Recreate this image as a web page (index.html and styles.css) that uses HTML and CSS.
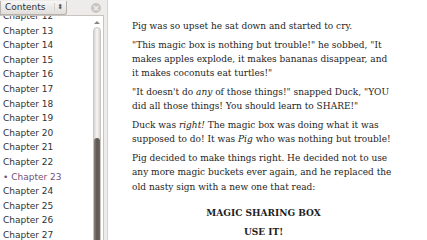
FILE: index.html
```html
<!DOCTYPE html>
<html lang="en">
<head>
    <meta charset="UTF-8">
    <title>Magic Box</title>
    <link rel="stylesheet" href="styles.css">
</head>
<body>

<div id="reader">
    <div id="sidebar">
        <div class="toolbar">
            <div class="combo">
                <span>Contents</span>
                <span class="combo-arrows">&#x2B0D;</span>
            </div>
            <div class="close-btn">&times;</div>
        </div>
        <div class="toc">
            <ul class="chapters">
                <li>Chapter 12</li>
                <li>Chapter 13</li>
                <li>Chapter 14</li>
                <li>Chapter 15</li>
                <li>Chapter 16</li>
                <li>Chapter 17</li>
                <li>Chapter 18</li>
                <li>Chapter 19</li>
                <li>Chapter 20</li>
                <li>Chapter 21</li>
                <li>Chapter 22</li>
                <li class="current">&bull; Chapter 23</li>
                <li>Chapter 24</li>
                <li>Chapter 25</li>
                <li>Chapter 26</li>
                <li>Chapter 27</li>
            </ul>
            <div class="scrollbar">
                <div class="arrow-up"></div>
                <div class="trough">
                    <div class="thumb"></div>
                </div>
            </div>
        </div>
    </div>

    <div class="pane-handle"></div>

    <div id="page">
        <p>Pig was so upset he sat down and started to cry.</p>
        <p>"This magic box is nothing but trouble!" he sobbed, "It makes apples explode, it makes bananas disappear, and it makes coconuts eat turtles!"</p>
        <p>"It doesn't do <em>any</em> of those things!" snapped Duck, "YOU did all those things! You should learn to SHARE!"</p>
        <p>Duck was <em>right!</em> The magic box was doing what it was supposed to do! It was <em>Pig</em> who was nothing but trouble!</p>
        <p>Pig decided to make things right. He decided not to use any more magic buckets ever again, and he replaced the old nasty sign with a new one that read:</p>
        <p class="sign first">MAGIC SHARING BOX</p>
        <p class="sign">USE IT!</p>
    </div>
</div>

</body>
</html>
```

FILE: styles.css
```css
* {
    margin: 0;
    padding: 0;
    box-sizing: border-box;
}

html, body {
    height: 100%;
    overflow: hidden;
}

body {
    background: white;
}

#reader {
    display: flex;
    height: 100%;
}

#sidebar {
    width: 104px;
    display: flex;
    flex-direction: column;
    background: #edeceb;
    font-family: "DejaVu Sans", sans-serif;
    font-size: 9px;
    color: #2e3436;
}

.toolbar {
    height: 15px;
    display: flex;
    align-items: center;
    justify-content: space-between;
    padding-right: 3px;
}

.combo {
    width: 67px;
    height: 14px;
    display: flex;
    align-items: center;
    justify-content: space-between;
    padding: 0 3px 0 4px;
    border: 1px solid #b6b2ad;
    border-top: none;
    border-radius: 0 0 3px 0;
    background: linear-gradient(#f7f6f5, #e1dedb);
    font-size: 9px;
}

.combo-arrows {
    font-size: 7px;
    color: #555;
    border-left: 1px solid #d3cfcb;
    padding-left: 2px;
}

.close-btn {
    width: 10px;
    height: 10px;
    border-radius: 50%;
    background: #c8c5c2;
    color: #f2f1f0;
    font-size: 9px;
    line-height: 10px;
    text-align: center;
    font-weight: bold;
}

.toc {
    flex: 1;
    display: flex;
    overflow: hidden;
    background: white;
    border-top: 1px solid #c7c3bf;
    border-right: 1px solid #c7c3bf;
}

.chapters {
    flex: 1;
    list-style: none;
    margin-top: -7px;
}

.chapters li {
    height: 14.6px;
    line-height: 14.6px;
    padding-left: 3px;
    white-space: nowrap;
}

.chapters li.current {
    color: #75507b;
}

.scrollbar {
    width: 12px;
    display: flex;
    flex-direction: column;
    align-items: center;
    padding: 3px 2px 0;
}

.arrow-up {
    width: 0;
    height: 0;
    border-left: 3px solid transparent;
    border-right: 3px solid transparent;
    border-bottom: 3px solid #8a8580;
    margin: 2px 0 3px;
}

.trough {
    flex: 1;
    width: 8px;
    background: linear-gradient(to right, #d8d5d2, #f6f5f4, #d8d5d2);
    border: 1px solid #c9c5c1;
    border-radius: 4px 4px 0 0;
}

.thumb {
    margin-top: 110px;
    height: 200px;
    background: linear-gradient(to right, #8a837d, #5d5650, #6e6761);
    border-radius: 3px 3px 0 0;
}

.pane-handle {
    width: 4px;
    background: #edeceb;
    border-right: 1px solid #d6d3d0;
}

#page {
    width: 287px;
    padding: 19px 0 0 24px;
    font-family: "DejaVu Serif", serif;
    font-size: 9px;
    line-height: 14.3px;
    color: #1e1e1e;
}

#page p {
    margin-bottom: 4.4px;
}

.sign {
    text-align: center;
    font-weight: bold;
    margin-bottom: 6.5px;
}

.sign.first {
    margin-top: 12px;
}
```
